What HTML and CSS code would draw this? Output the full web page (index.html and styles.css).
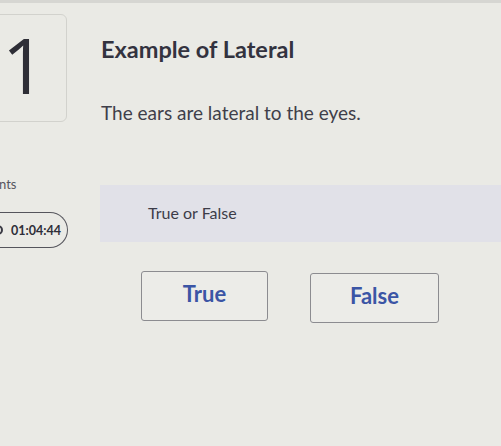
FILE: index.html
```html
<!DOCTYPE html>
<html>
<head>
<meta charset="utf-8">
<link rel="stylesheet" href="styles.css">
</head>
<body>
<div class="topline"></div>
<div class="header">
  <div class="numbox"><span class="num">1</span></div>
  <div class="qtext">
    <h1 class="title">Example of Lateral</h1>
    <p class="desc">The ears are lateral to the eyes.</p>
  </div>
</div>
<div class="main">
  <aside class="side">
    <div class="points">nts</div>
    <div class="timer"><span class="ticon"></span><span class="ttext">01:04:44</span></div>
  </aside>
  <section class="content">
    <div class="band">True or False</div>
    <div class="answers">
      <button class="ans ans-true">True</button>
      <button class="ans ans-false">False</button>
    </div>
  </section>
</div>
</body>
</html>
```
FILE: styles.css
```css
html, body {
  margin: 0;
  padding: 0;
}
body {
  width: 501px;
  height: 446px;
  overflow: hidden;
  background: #eaeae5;
  font-family: Lato, "Noto Sans", sans-serif;
  color: #3b3b48;
}
.topline {
  height: 3px;
  background: #d6d6d2;
}
.header {
  display: flex;
  margin-top: 11px;
  height: 108px;
}
.numbox {
  margin-left: -14px;
  width: 81px;
  height: 108px;
  box-sizing: border-box;
  border: 1px solid #d2d2cd;
  border-radius: 6px;
  display: flex;
  align-items: center;
  padding-left: 15px;
}
.num {
  font-family: "Open Sans", "Noto Sans", sans-serif;
  font-size: 77px;
  font-weight: 400;
  -webkit-text-stroke: 0;
  color: #2e2e36;
  line-height: 1;
  margin-top: -8px;
}
.qtext {
  margin-left: 34px;
}
.title {
  margin: 21px 0 0;
  font-size: 23.5px;
  font-weight: 700;
  color: #33333f;
}
.desc {
  margin: 38px 0 0;
  font-size: 19px;
  color: #3f3f4a;
}
.main {
  display: flex;
  margin-top: 54px;
}
.side {
  width: 100px;
  flex: none;
}
.points {
  font-size: 13px;
  color: #55555e;
  height: 18px;
  margin-left: -1px;
}
.timer {
  margin-top: 18px;
  margin-left: -20px;
  width: 88px;
  height: 36px;
  box-sizing: border-box;
  border: 1px solid #55555c;
  border-left: none;
  border-radius: 0 18px 18px 0;
  display: flex;
  align-items: center;
  padding-left: 13px;
  gap: 8px;
}
.ticon {
  width: 10px;
  height: 10px;
  border: 2px solid #3a3a44;
  border-radius: 50%;
  box-sizing: border-box;
}
.ttext {
  font-size: 12.5px;
  font-weight: 700;
  color: #2e2e38;
}
.content {
  flex: 1;
  margin-top: 9px;
}
.band {
  height: 57px;
  background: #e1e1e8;
  box-sizing: border-box;
  padding: 18px 0 0 48px;
  font-size: 16px;
  color: #3c3c48;
}
.answers {
  display: flex;
  gap: 42px;
  margin-top: 29px;
  margin-left: 41px;
}
.ans {
  width: 127px;
  height: 50px;
  background: #ecece8;
  border: 1px solid #8c8c90;
  border-radius: 3px;
  font-family: Lato, "Noto Sans", sans-serif;
  font-size: 22px;
  font-weight: 700;
  color: #3b55a5;
  padding: 0 0 6px;
}
.ans-false {
  width: 129px;
  margin-top: 2px;
}
```
